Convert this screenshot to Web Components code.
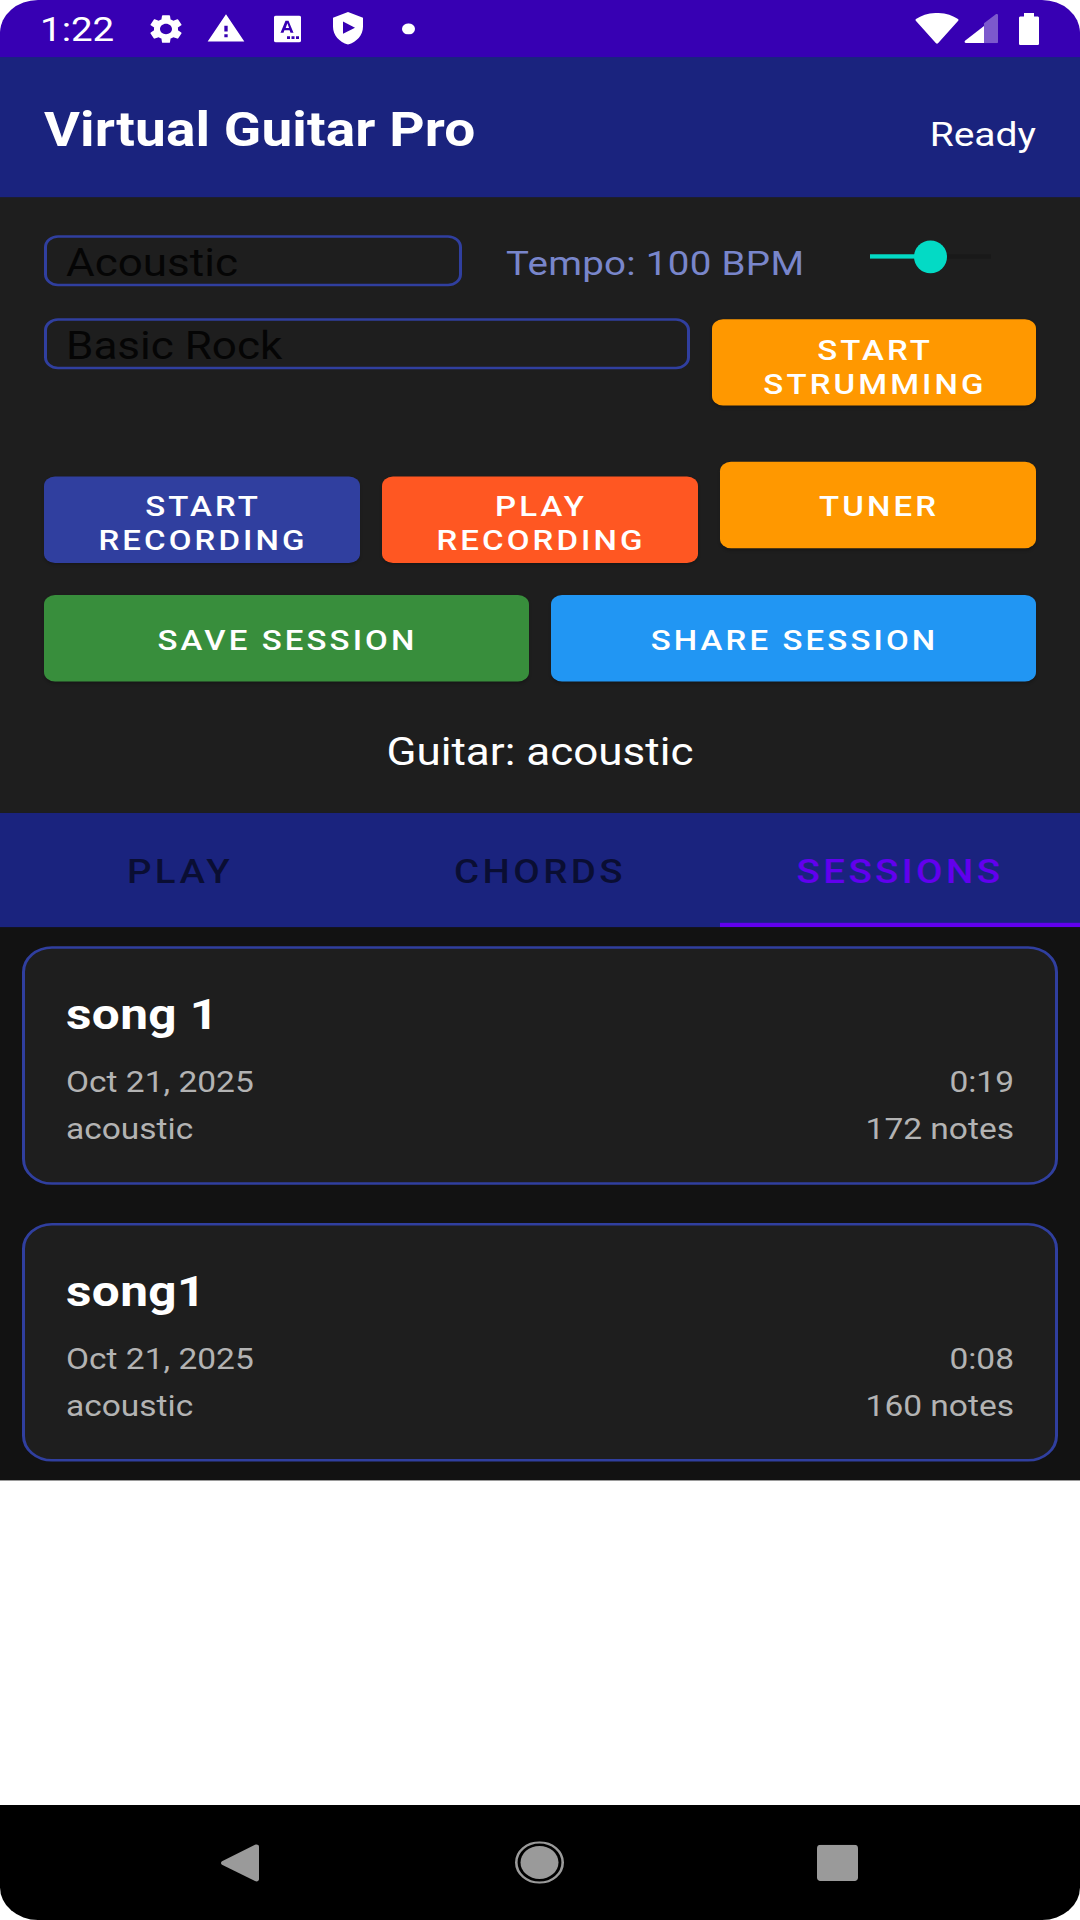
<!DOCTYPE html>
<html>
<head>
<meta charset="utf-8">
<style>
    html, body { margin: 0; padding: 0; background: #fff; overflow: hidden; }
    body { width: 1080px; height: 1920px; font-family: Roboto, "Liberation Sans", sans-serif; }
</style>
</head>
<body>
<device-frame>
    <status-bar></status-bar>
    <app-header title="Virtual Guitar Pro" status="Ready"></app-header>
    <control-panel>
        <control-row class="first">
            <drop-down grow value="Acoustic"></drop-down>
            <tempo-label>Tempo: 100 BPM</tempo-label>
            <tempo-slider></tempo-slider>
        </control-row>
        <control-row class="second">
            <drop-down grow value="Basic Rock"></drop-down>
            <action-button color="#FF9800" width="324" pad>Start Strumming</action-button>
        </control-row>
        <control-row class="third">
            <action-button color="#303F9F" grow pad>Start Recording</action-button>
            <action-button color="#FF5722" grow pad>Play Recording</action-button>
            <action-button color="#FF9800" grow>Tuner</action-button>
        </control-row>
        <control-row class="fourth">
            <action-button color="#388E3C" grow>Save Session</action-button>
            <action-button color="#2196F3" grow>Share Session</action-button>
        </control-row>
        <guitar-label>Guitar: acoustic</guitar-label>
    </control-panel>
    <tab-strip active="2" tabs="Play,Chords,Sessions"></tab-strip>
    <session-list>
        <session-card name="song 1" date="Oct 21, 2025" length="0:19" kind="acoustic" notes="172 notes"></session-card>
        <session-card name="song1" date="Oct 21, 2025" length="0:08" kind="acoustic" notes="160 notes"></session-card>
    </session-list>
    <blank-space></blank-space>
    <nav-bar></nav-bar>
</device-frame>

<script>
// the device screen is 1080x2220 (2.75 px per dp), squeezed into the 1920 high photo
class DeviceFrame extends HTMLElement {
    constructor() {
        super();
        this.attachShadow({ mode: 'open' });
        this.shadowRoot.innerHTML = `
        <style>
            :host {
                display: block;
                width: 1080px;
                height: 1920px;
                overflow: hidden;
            }
            .screen {
                display: flex;
                flex-direction: column;
                width: 1080px;
                height: 2220px;
                transform: scaleY(calc(1920 / 2220));
                transform-origin: top left;
                background: #fff;
            }
        </style>
        <div class="screen"><slot></slot></div>
        `;
    }
}

class StatusBar extends HTMLElement {
    constructor() {
        super();
        this.attachShadow({ mode: 'open' });
        this.shadowRoot.innerHTML = `
        <style>
            :host {
                display: flex;
                align-items: center;
                height: 66px;
                flex: none;
                background: #3700B3;
                border-radius: 38px 38px 0 0;
                box-shadow: 0 2px 0 #3700B3;
                color: #fff;
                font: 400 38.500px Roboto, sans-serif;
            }
            .time { margin-left: 40px; width: 101px; }
            svg { display: block; flex: none; fill: #fff; }
            .spacer { flex: 1; }
        </style>
        <span class="time">1:22</span>
        <svg style="margin-left:5px" width="40" height="43" viewBox="0 0 24 24"><path d="M19.14 12.94c.04-.3.06-.61.06-.94 0-.32-.02-.64-.07-.94l2.03-1.58a.49.49 0 0 0 .12-.61l-1.92-3.32a.488.488 0 0 0-.59-.22l-2.39.96c-.5-.38-1.03-.7-1.62-.94l-.36-2.54a.484.484 0 0 0-.48-.41h-3.84c-.24 0-.43.17-.47.41l-.36 2.54c-.59.24-1.13.57-1.62.94l-2.39-.96c-.22-.08-.47 0-.59.22L2.74 8.87c-.12.21-.08.47.12.61l2.03 1.58c-.05.3-.09.63-.09.94s.02.64.07.94l-2.03 1.58a.49.49 0 0 0-.12.61l1.92 3.32c.12.22.37.29.59.22l2.39-.96c.5.38 1.03.7 1.62.94l.36 2.54c.05.24.24.41.48.41h3.84c.24 0 .44-.17.47-.41l.36-2.54c.59-.24 1.13-.56 1.62-.94l2.39.96c.22.08.47 0 .59-.22l1.92-3.32c.12-.22.07-.47-.12-.61l-2.01-1.58zM12 15.6c-1.98 0-3.6-1.62-3.6-3.6s1.62-3.6 3.6-3.6 3.6 1.62 3.6 3.6-1.62 3.6-3.6 3.6z"/></svg>
        <svg style="margin-left:20px" width="40" height="42" viewBox="0 0 24 24"><path d="M1 21h22L12 2 1 21zm12-3h-2v-2h2v2zm0-4h-2v-4h2v4z"/></svg>
        <svg style="margin-left:28px" width="27" height="31" viewBox="0 0 27 31"><path fill-rule="evenodd" d="M2 0h23a2 2 0 0 1 2 2v27a2 2 0 0 1-2 2H2a2 2 0 0 1-2-2V2a2 2 0 0 1 2-2zM11.500 6 6.500 20h3l.9-3h5.200l.9 3h3L14.500 6zm1.900 3 1.700 5.500h-3.400zM13 24h3v3h-3zM17.500 24h3v3h-3zM22 24h3v3h-3z"/></svg>
        <svg style="margin-left:31px" width="32" height="38" viewBox="0 0 32 38"><path fill-rule="evenodd" d="M16 0 1 6.500V17c0 9.500 6.400 18 15 20.500C24.600 35 31 26.500 31 17V6.500zM11 11l12 7-12 7z"/></svg>
        <svg style="margin-left:38px" width="13" height="13" viewBox="0 0 13 13"><circle cx="6.500" cy="6.500" r="6.500"/></svg>
        <span class="spacer"></span>
        <svg width="44" height="36" viewBox="0 0 44 36"><path d="M22 0C13.500 0 6.500 2.700 1 7.100c-.6.500-.7 1.200-.2 1.800L21 35c.5.600 1.500.6 2 0L43.200 8.900c.5-.6.400-1.300-.2-1.800C37.500 2.700 30.500 0 22 0z"/></svg>
        <svg style="margin-left:5px" width="34" height="34" viewBox="0 0 34 34"><path d="M20 14 1 31c-.8.800-.4 2.600 1 2.600h18z"/><path fill-opacity=".35" d="M20 34h12.500c.9 0 1.500-.6 1.500-1.500V1.500C34 .2 32.800-.4 31.800.5L20 11z"/></svg>
        <svg style="margin-left:21px;margin-right:41px" width="20" height="37" viewBox="0 0 20 37"><path d="M5 0h10v4h3.500c.8 0 1.500.7 1.500 1.500V35.500c0 .8-.7 1.500-1.500 1.500h-17C.7 37 0 36.300 0 35.500V5.500C0 4.700.7 4 1.500 4H5z"/></svg>
        `;
    }
}

class AppHeader extends HTMLElement {
    constructor() {
        super();
        this.attachShadow({ mode: 'open' });
        this.shadowRoot.innerHTML = `
        <style>
            :host {
                display: flex;
                align-items: baseline;
                justify-content: space-between;
                flex: none;
                box-sizing: border-box;
                height: 162px;
                padding: 48px 44px 0;
                background: #1A237E;
                box-shadow: 0 2px 0 #1A237E;
                color: #fff;
                font-family: Roboto, sans-serif;
            }
            .title { font-size: 55px; font-weight: 700; line-height: 72px; letter-spacing: 0.100px; }
            .status { font-size: 39px; }
        </style>
        <span class="title"></span>
        <span class="status"></span>
        `;
        this.shadowRoot.querySelector('.title').textContent = this.getAttribute('title');
        this.shadowRoot.querySelector('.status').textContent = this.getAttribute('status');
    }
}

class ControlPanel extends HTMLElement {
    constructor() {
        super();
        this.attachShadow({ mode: 'open' });
        this.shadowRoot.innerHTML = `
        <style>
            :host {
                display: flex;
                flex-direction: column;
                flex: none;
                box-sizing: border-box;
                height: 712px;
                padding: 44px 44px 0;
                background: #1E1E1E;
                box-shadow: 0 2px 0 #1E1E1E;
            }
        </style>
        <slot></slot>
        `;
    }
}

class ControlRow extends HTMLElement {
    constructor() {
        super();
        this.attachShadow({ mode: 'open' });
        this.shadowRoot.innerHTML = `
        <style>
            :host { display: flex; gap: 22px; flex: none; }
            :host(.first) { height: 59px; margin-bottom: 37px; align-items: center; gap: 0; }
            :host(.second) { height: 101px; margin-bottom: 65px; align-items: flex-start; }
            :host(.third) { height: 116px; margin-bottom: 38px; align-items: baseline; }
            :host(.fourth) { height: 100px; margin-bottom: 52px; }
        </style>
        <slot></slot>
        `;
    }
}

class DropDown extends HTMLElement {
    constructor() {
        super();
        this.attachShadow({ mode: 'open' });
        this.shadowRoot.innerHTML = `
        <style>
            :host {
                display: block;
                box-sizing: border-box;
                height: 59px;
                padding: 0 19px;
                border: 3px solid #303F9F;
                border-radius: 14px;
                color: #050505;
                font: 400 44px/59px Roboto, sans-serif;
                overflow: hidden;
            }
            :host([grow]) { flex: 1; }
        </style>
        <span></span>
        `;
        this.shadowRoot.querySelector('span').textContent = this.getAttribute('value');
    }
}

class TempoLabel extends HTMLElement {
    constructor() {
        super();
        this.attachShadow({ mode: 'open' });
        this.shadowRoot.innerHTML = `
        <style>
            :host {
                display: block;
                flex: none;
                box-sizing: border-box;
                width: 408px;
                padding: 6px 0 0 44px;
                color: #7986CB;
                font: 400 38.500px Roboto, sans-serif;
                letter-spacing: 0.300px;
            }
        </style>
        <slot></slot>
        `;
    }
}

class TempoSlider extends HTMLElement {
    constructor() {
        super();
        this.attachShadow({ mode: 'open' });
        this.shadowRoot.innerHTML = `
        <style>
            :host {
                display: flex;
                align-items: center;
                flex: none;
                width: 121px;
                height: 33px;
                margin: -10px 45px 0 0;
                position: relative;
            }
            .on { width: 61px; height: 5px; background: #03DAC5; }
            .off { flex: 1; height: 5px; background: #191919; }
            .thumb {
                position: absolute;
                left: 44px;
                top: 0;
                width: 33px;
                height: 38px;
                margin-top: -2.500px;
                border-radius: 50%;
                background: #03DAC5;
            }
        </style>
        <div class="on"></div><div class="off"></div><div class="thumb"></div>
        `;
    }
}

class ActionButton extends HTMLElement {
    constructor() {
        super();
        this.attachShadow({ mode: 'open' });
        this.shadowRoot.innerHTML = `
        <style>
            :host {
                display: flex;
                align-items: center;
                justify-content: center;
                box-sizing: border-box;
                height: 100px;
                padding: 3px 24px 0 26px;
                border-radius: 11px;
                color: #fff;
                font: 500 33px/39px Roboto, sans-serif;
                letter-spacing: 3.100px;
                text-align: center;
                text-transform: uppercase;
                box-shadow: 0 2px 3px rgba(0,0,0,.2);
            }
            :host([pad]) { padding-top: 9px; }
            :host([grow]) { flex: 1 1 0; }
            :host([width]) { margin-top: 1px; }
        </style>
        <span><slot></slot></span>
        `;
    }

    connectedCallback() {
        this.style.background = this.getAttribute('color');
        const w = this.getAttribute('width');
        if (w) this.style.width = w + 'px';
    }
}

class GuitarLabel extends HTMLElement {
    constructor() {
        super();
        this.attachShadow({ mode: 'open' });
        this.shadowRoot.innerHTML = `
        <style>
            :host {
                display: block;
                color: #fff;
                text-align: center;
                font: 400 44px/60px Roboto, sans-serif;
            }
        </style>
        <slot></slot>
        `;
    }
}

class TabStrip extends HTMLElement {
    constructor() {
        super();
        this.attachShadow({ mode: 'open' });
        const active = parseInt(this.getAttribute('active'), 10);
        const tabs = this.getAttribute('tabs').split(',').map((t, i) =>
            `<div class="tab ${i === active ? 'on' : ''}">${t}</div>`).join('');
        this.shadowRoot.innerHTML = `
        <style>
            :host {
                display: grid;
                grid-template-columns: repeat(3, 1fr);
                flex: none;
                height: 132px;
                background: #1A237E;
                box-shadow: 0 2px 0 #1A237E;
                font: 500 38.500px Roboto, sans-serif;
                letter-spacing: 3.400px;
                text-transform: uppercase;
            }
            .tab {
                display: flex;
                align-items: center;
                justify-content: center;
                color: rgba(0,0,0,.6);
                box-sizing: border-box;
                border-bottom: 5.500px solid transparent;
                padding-top: 8px;
            }
            .on { color: #6200EE; border-bottom-color: #6200EE; }
        </style>
        ${tabs}
        `;
    }
}

class SessionList extends HTMLElement {
    constructor() {
        super();
        this.attachShadow({ mode: 'open' });
        this.shadowRoot.innerHTML = `
        <style>
            :host {
                display: flex;
                flex-direction: column;
                flex: none;
                gap: 44px;
                padding: 22px;
                background: #121212;
            }
        </style>
        <slot></slot>
        `;
    }
}

class SessionCard extends HTMLElement {
    constructor() {
        super();
        this.attachShadow({ mode: 'open' });
        this.shadowRoot.innerHTML = `
        <style>
            :host {
                display: block;
                box-sizing: border-box;
                height: 276px;
                padding: 44px 41px 0;
                border: 3px solid #303F9F;
                border-radius: 30px;
                background: #1E1E1E;
                font-family: Roboto, sans-serif;
            }
            .name { color: #fff; font-size: 49.500px; font-weight: 700; line-height: 64px; margin-bottom: 27px; letter-spacing: 0.400px; }
            .line {
                display: flex;
                justify-content: space-between;
                color: #B3B3B3;
                font-size: 33.500px;
                line-height: 39px;
                margin-bottom: 15px;
            }
        </style>
        <div class="name"></div>
        <div class="line"><span class="date"></span><span class="length"></span></div>
        <div class="line"><span class="kind"></span><span class="notes"></span></div>
        `;
        for (const key of ['name', 'date', 'length', 'kind', 'notes']) {
            this.shadowRoot.querySelector('.' + key).textContent = this.getAttribute(key);
        }
    }
}

class BlankSpace extends HTMLElement {
    constructor() {
        super();
        this.attachShadow({ mode: 'open' });
        this.shadowRoot.innerHTML = `
        <style>
            :host { display: block; flex: 1; background: #fff; }
        </style>
        `;
    }
}

class NavBar extends HTMLElement {
    constructor() {
        super();
        this.attachShadow({ mode: 'open' });
        this.shadowRoot.innerHTML = `
        <style>
            :host {
                display: flex;
                align-items: center;
                flex: none;
                box-sizing: border-box;
                height: 133px;
                padding-left: 221px;
                background: #000;
                border-radius: 0 0 38px 38px;
            }
            svg { display: block; flex: none; fill: #9A9A9A; }
        </style>
        <svg width="38" height="44" viewBox="0 0 38 44"><path d="M1 20 34 1c2-1 4 0 4 2v38c0 2-2 3-4 2L1 24c-1.300-.8-1.300-3.200 0-4z"/></svg>
        <svg style="margin-left:256px" width="49" height="49" viewBox="0 0 49 49"><circle cx="24.500" cy="24.500" r="23.200" fill="none" stroke="#9A9A9A" stroke-width="2.600"/><circle cx="24.500" cy="24.500" r="19"/></svg>
        <svg style="margin-left:253px" width="41" height="42" viewBox="0 0 41 42"><rect width="41" height="42" rx="4"/></svg>
        `;
    }
}

customElements.define('device-frame', DeviceFrame);
customElements.define('status-bar', StatusBar);
customElements.define('app-header', AppHeader);
customElements.define('control-panel', ControlPanel);
customElements.define('control-row', ControlRow);
customElements.define('drop-down', DropDown);
customElements.define('tempo-label', TempoLabel);
customElements.define('tempo-slider', TempoSlider);
customElements.define('action-button', ActionButton);
customElements.define('guitar-label', GuitarLabel);
customElements.define('tab-strip', TabStrip);
customElements.define('session-list', SessionList);
customElements.define('session-card', SessionCard);
customElements.define('blank-space', BlankSpace);
customElements.define('nav-bar', NavBar);
</script>
</body>
</html>
